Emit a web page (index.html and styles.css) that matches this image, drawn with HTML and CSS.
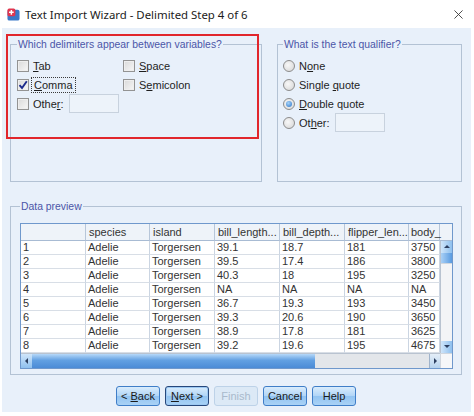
FILE: index.html
```html
<!DOCTYPE html>
<html>
<head>
<meta charset="utf-8">
<title>Text Import Wizard</title>
<link rel="stylesheet" href="styles.css">
</head>
<body>
<div class="titlebar">
  <svg class="app-icon" viewBox="0 0 14 14"><rect x="0.5" y="2" width="13" height="11.5" rx="2" fill="#3a78c8"/><rect x="0.5" y="0.5" width="8.5" height="8.5" rx="1.8" fill="#e0364f"/><path d="M4.7 2.2v5M2.2 4.7h5" stroke="#fff" stroke-width="1.6"/></svg>
  <span class="title">Text Import Wizard - Delimited Step 4 of 6</span>
  <svg class="close" viewBox="0 0 10 10"><path d="M0.5 0.5 9.5 9.5M9.5 0.5 0.5 9.5" stroke="#3a3a3a" stroke-width="1"/></svg>
</div>
<div class="window">
  <div class="top">
    <fieldset class="group delims">
      <legend>Which delimiters appear between variables?</legend>
      <div class="opts">
        <label class="opt"><span class="cb"></span><span><u>T</u>ab</span></label>
        <label class="opt"><span class="cb"></span><span><u>S</u>pace</span></label>
        <label class="opt"><span class="cb"><svg viewBox="0 0 10 10"><path d="M1.5 5.2 4 8 8.8 1.2" fill="none" stroke="#1c2a8c" stroke-width="1.9"/></svg></span><span class="focus"><u>C</u>omma</span></label>
        <label class="opt"><span class="cb"></span><span>S<u>e</u>micolon</span></label>
        <label class="opt wide"><span class="cb"></span><span>Othe<u>r</u>:</span><span class="field"></span></label>
      </div>
    </fieldset>
    <fieldset class="group qual">
      <legend>What is the text qualifier?</legend>
      <div class="radios">
        <label class="opt"><span class="rb"></span><span>N<u>o</u>ne</span></label>
        <label class="opt"><span class="rb"></span><span>Single <u>q</u>uote</span></label>
        <label class="opt"><span class="rb on"></span><span><u>D</u>ouble quote</span></label>
        <label class="opt"><span class="rb"></span><span>Ot<u>h</u>er:</span><span class="field"></span></label>
      </div>
    </fieldset>
    <div class="highlight"></div>
  </div>

  <fieldset class="group preview">
    <legend>Data preview</legend>
    <div class="datagrid">
      <div class="vscroll"><span class="sb-btn up"></span><span class="sb-thumb"></span><span class="sb-track"></span><span class="sb-btn down"></span></div>
      <div class="hscroll"><span class="hb-btn left"></span><span class="hb-thumb"></span><span class="hb-track"></span><span class="hb-btn right"></span></div>
      <div class="corner"></div>

      <div class="c h"></div><div class="c h">species</div><div class="c h">island</div><div class="c h">bill_length...</div><div class="c h">bill_depth...</div><div class="c h">flipper_len...</div><div class="c h last">body_</div><div class="c h fill"></div>

      <div class="c">1</div><div class="c">Adelie</div><div class="c">Torgersen</div><div class="c">39.1</div><div class="c">18.7</div><div class="c">181</div><div class="c">3750</div>
      <div class="c">2</div><div class="c">Adelie</div><div class="c">Torgersen</div><div class="c">39.5</div><div class="c">17.4</div><div class="c">186</div><div class="c">3800</div>
      <div class="c">3</div><div class="c">Adelie</div><div class="c">Torgersen</div><div class="c">40.3</div><div class="c">18</div><div class="c">195</div><div class="c">3250</div>
      <div class="c">4</div><div class="c">Adelie</div><div class="c">Torgersen</div><div class="c">NA</div><div class="c">NA</div><div class="c">NA</div><div class="c">NA</div>
      <div class="c">5</div><div class="c">Adelie</div><div class="c">Torgersen</div><div class="c">36.7</div><div class="c">19.3</div><div class="c">193</div><div class="c">3450</div>
      <div class="c">6</div><div class="c">Adelie</div><div class="c">Torgersen</div><div class="c">39.3</div><div class="c">20.6</div><div class="c">190</div><div class="c">3650</div>
      <div class="c">7</div><div class="c">Adelie</div><div class="c">Torgersen</div><div class="c">38.9</div><div class="c">17.8</div><div class="c">181</div><div class="c">3625</div>
      <div class="c">8</div><div class="c">Adelie</div><div class="c">Torgersen</div><div class="c">39.2</div><div class="c">19.6</div><div class="c">195</div><div class="c">4675</div>
    </div>
  </fieldset>

  <div class="buttons">
    <button type="button" class="btn"><span>&lt; <u>B</u>ack</span></button>
    <button type="button" class="btn default"><span><u>N</u>ext &gt;</span></button>
    <button type="button" class="btn disabled"><span>Finish</span></button>
    <button type="button" class="btn"><span>Cancel</span></button>
    <button type="button" class="btn"><span>Help</span></button>
  </div>
</div>
</body>
</html>
```

FILE: styles.css
```css
* { box-sizing: border-box; }
html, body { margin: 0; padding: 0; }
body {
  width: 474px;
  height: 416px;
  overflow: hidden;
  background: #ffffff;
  font-family: "Liberation Sans", Arial, sans-serif;
  font-size: 11px;
  color: #1e1e1e;
}

/* title bar */
.titlebar {
  height: 28px;
  display: flex;
  align-items: center;
  padding: 0 11px 0 7px;
  background: #ffffff;
}
.app-icon { width: 13px; height: 13px; margin-right: 5px; flex: none; }
.title {
  flex: 1;
  font-family: "Noto Sans", sans-serif;
  font-size: 11.4px;
  color: #1b1b1b;
}
.close { width: 9px; height: 9px; flex: none; }

/* window body */
.window {
  margin: 0 3px 0 2px;
  height: 384px;
  background: #e8f0fa;
  padding: 10px 9px 0 8px;
}

.top {
  position: relative;
  display: flex;
  gap: 15px;
  height: 144px;
}

.group {
  margin: 0;
  min-width: 0;
  border: 1px solid #b3c2d4;
  padding: 5px 6px 0;
}
.group legend {
  padding: 0 1px;
  color: #4b56a8;
  font-size: 10.4px;
  line-height: 13px;
}
.delims { width: 252px; }
.qual { width: 185px; padding-left: 5px; }

.opts {
  display: grid;
  grid-template-columns: 106px auto;
  grid-auto-rows: 19px;
}
.opt {
  display: flex;
  align-items: center;
  white-space: nowrap;
}
.opt.wide { grid-column: 1 / 3; }
.radios { display: flex; flex-direction: column; }
.radios .opt { height: 19px; }

.cb {
  width: 12px;
  height: 12px;
  margin-right: 4px;
  flex: none;
  border: 1px solid #939393;
  background: linear-gradient(135deg, #d9d9d9, #f7f7f7);
  box-shadow: inset 0 0 0 1px #eeeeee;
  display: flex;
  align-items: center;
  justify-content: center;
}
.cb svg { width: 10px; height: 10px; }

.rb {
  width: 12px;
  height: 12px;
  margin-right: 4px;
  flex: none;
  border: 1px solid #8c8c8c;
  border-radius: 50%;
  background: radial-gradient(circle at 40% 40%, #f8f8f8, #d4d4d4);
  display: flex;
  align-items: center;
  justify-content: center;
}
.rb.on::after {
  content: "";
  width: 6px;
  height: 6px;
  border-radius: 50%;
  background: radial-gradient(circle at 40% 35%, #a6d4fa, #2a72c6);
}

.focus {
  outline: 1px dotted #3a3a3a;
  outline-offset: 1px;
  padding: 0 1px;
}
.field {
  width: 50px;
  height: 19px;
  margin-left: 5px;
  flex: none;
  border: 1px solid #c8d2de;
  background: #edf3fa;
}

.highlight {
  position: absolute;
  left: -4px;
  top: -4px;
  width: 253px;
  height: 105px;
  border: 2px solid #e1262c;
  pointer-events: none;
}

/* data preview */
.preview {
  margin-top: 18px;
  padding: 10px 8px 5px 9px;
}
.datagrid {
  display: grid;
  width: 433px;
  grid-template-columns: 65px 64px 65px 65px 65px 64px 31px 12px;
  grid-template-rows: 17px repeat(8, 14px) 15px;
  border: 1px solid #6f98cc;
  background: #ffffff;
}
.c {
  border-right: 1px solid #cbd5e2;
  border-bottom: 1px solid #d8dee6;
  padding-left: 2px;
  line-height: 13px;
  white-space: nowrap;
  overflow: hidden;
  color: #333333;
  background: #ffffff;
}
.c.h {
  background: #eef3f9;
  border-right-color: #b7c6d9;
  border-bottom: 1px solid #a8bbd3;
  line-height: 16px;
  padding-left: 3px;
}
.c.h.last { overflow: visible; padding-left: 2px; position: relative; z-index: 1; }
.c.h.fill { border-right: none; background: #eef3f9; }

.vscroll {
  grid-column: 8;
  grid-row: 2 / 10;
  display: flex;
  flex-direction: column;
  background: #eef0f3;
  border-left: 1px solid #b9c3d0;
}
.sb-btn {
  height: 12px;
  flex: none;
  background: linear-gradient(90deg, #cfe5fa, #8fc0ee);
  position: relative;
}
.sb-btn.up::after, .sb-btn.down::after {
  content: "";
  position: absolute;
  left: 3px;
  top: 4px;
  border-left: 3px solid transparent;
  border-right: 3px solid transparent;
}
.sb-btn.up::after { border-bottom: 3px solid #2d3f60; }
.sb-btn.down::after { border-top: 3px solid #2d3f60; }
.sb-thumb {
  height: 10px;
  flex: none;
  background: linear-gradient(90deg, #a9d0f6, #5a9be0);
}
.sb-track { flex: 1; background: #f3f4f6; border-top: 1px solid #d0d6de; }

.hscroll {
  grid-column: 1 / 8;
  grid-row: 10;
  display: flex;
  border-top: 1px solid #b9c3d0;
}
.hb-btn {
  width: 11px;
  flex: none;
  position: relative;
  background: linear-gradient(#cfe5fa, #8fc0ee);
}
.hb-btn.left::after, .hb-btn.right::after {
  content: "";
  position: absolute;
  top: 4px;
  left: 4px;
  border-top: 3px solid transparent;
  border-bottom: 3px solid transparent;
}
.hb-btn.left::after { border-right: 3px solid #2d3f60; }
.hb-btn.right::after { border-left: 3px solid #2d3f60; }
.hb-btn.right { background: linear-gradient(#e4eef8, #b7d3ee); border-left: 1px solid #9fb3cb; }
.hb-thumb {
  width: 283px;
  flex: none;
  background: linear-gradient(#b6d8f8, #62a0e2 45%, #4b8bd6);
}
.hb-track { flex: 1; background: #e3e6ea; }
.corner {
  grid-column: 8;
  grid-row: 10;
  background: #f6f7f9;
  border-top: 1px solid #d0d6de;
  border-left: 1px solid #d0d6de;
}

/* buttons */
.buttons {
  display: flex;
  justify-content: center;
  gap: 5px;
  margin-top: 11px;
}
.btn {
  width: 44px;
  height: 20px;
  margin: 0;
  padding: 0;
  border: 1px solid #3f7ec8;
  border-radius: 3px;
  background: linear-gradient(#d9ecfc, #b2d6f7 48%, #93c4f1 52%, #a9d2f6);
  font-family: "Liberation Sans", Arial, sans-serif;
  font-size: 11px;
  color: #1a1a1a;
  white-space: nowrap;
}
.btn.default { border-color: #27487c; box-shadow: inset 0 0 0 1px #9cc8f2; }
.btn.disabled {
  border-color: #bdd2e8;
  background: #dce9f6;
  color: #a9b9cc;
}
```
